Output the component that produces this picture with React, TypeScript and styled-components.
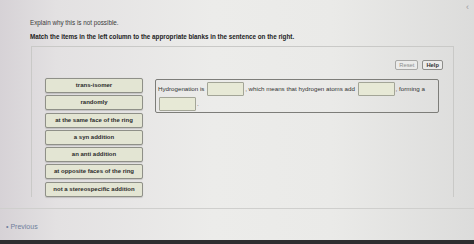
import React from "react";
import styled, { createGlobalStyle } from "styled-components";

const Global = createGlobalStyle`
  html, body { margin: 0; padding: 0; }
  body { font-family: "Liberation Sans", Arial, sans-serif; }
`;

const Page = styled.div`
  position: relative;
  width: 474px;
  height: 244px;
  overflow: hidden;
  display: flex;
  flex-direction: column;
  background: linear-gradient(90deg, #d6d2d6 0%, #e3e1e2 12%, #ececea 45%, #eaeae8 70%, #dcdcdb 100%);
  color: #2a2a2a;
`;

const Back = styled.div`
  position: absolute;
  right: 5px;
  top: 2px;
  font-size: 9px;
  color: #9a9a9e;
`;

const Intro = styled.div`
  margin: 19px 0 0 30px;
  font-size: 6.3px;
  line-height: 8px;
  color: #3a3a3a;
`;

const Prompt = styled.div`
  margin: 6px 0 0 30px;
  font-size: 6.3px;
  line-height: 8px;
  font-weight: bold;
  color: #222;
`;

const Panel = styled.div`
  margin: 5px 0 0 31px;
  width: 423px;
  height: 151px;
  border: 1px solid #c9c9c7;
  border-bottom: none;
  box-sizing: border-box;
  display: flex;
  flex-direction: column;
`;

const Toolbar = styled.div`
  display: flex;
  justify-content: flex-end;
  gap: 4px;
  padding: 13px 10px 0 0;
`;

const ToolButton = styled.div<{ $strong?: boolean }>`
  height: 10px;
  padding: 0 3px;
  border: 1px solid ${(p) => (p.$strong ? "#8d8d8a" : "#a8a8a6")};
  border-radius: 2px;
  box-sizing: border-box;
  font-size: 5.8px;
  line-height: 8px;
  font-weight: ${(p) => (p.$strong ? "bold" : "normal")};
  color: ${(p) => (p.$strong ? "#333" : "#8e8e8e")};
  background: #ebebea;
`;

const Work = styled.div`
  display: flex;
  gap: 12px;
  padding: 8px 0 0 13px;
`;

const Items = styled.div`
  display: flex;
  flex-direction: column;
  gap: 2.3px;
`;

const Item = styled.div`
  width: 98px;
  height: 15px;
  box-sizing: border-box;
  border: 1px solid #8f9088;
  border-radius: 2px;
  background: #e3e5d3;
  box-shadow: 0 0.5px 1px rgba(0, 0, 0, 0.15);
  font-size: 6px;
  font-weight: bold;
  line-height: 13px;
  text-align: center;
  color: #2c2c2c;
  white-space: nowrap;
`;

const Sentence = styled.div`
  margin-top: 1px;
  width: 284px;
  height: 34px;
  box-sizing: border-box;
  border: 1.5px solid #7d7d79;
  border-radius: 2px;
  padding: 2px 2px 0 2px;
  display: flex;
  flex-wrap: wrap;
  align-content: flex-start;
  align-items: center;
  row-gap: 1px;
  font-size: 6.2px;
  color: #333;
`;

const Words = styled.span`
  white-space: pre;
  line-height: 14px;
`;

const Blank = styled.span`
  display: inline-block;
  width: 37px;
  height: 14px;
  box-sizing: border-box;
  border: 1px solid #a3a597;
  border-radius: 1px;
  background: #e7e9d6;
  margin: 0 1px;
`;

const Divider = styled.div`
  margin-top: 11px;
  height: 1px;
  background: #cfcfcd;
`;

const Footer = styled.div`
  padding: 13px 0 0 6px;
  font-size: 7px;
  line-height: 9px;
  color: #6f7f9c;
`;

const Band = styled.div`
  margin-top: auto;
  height: 4px;
  background: #2e2e30;
`;

const items = [
  "trans-isomer",
  "randomly",
  "at the same face of the ring",
  "a syn addition",
  "an anti addition",
  "at opposite faces of the ring",
  "not a stereospecific addition",
];

export default function App() {
  return (
    <>
      <Global />
      <Page>
        <Back>‹</Back>
        <Intro>Explain why this is not possible.</Intro>
        <Prompt>Match the items in the left column to the appropriate blanks in the sentence on the right.</Prompt>
        <Panel>
          <Toolbar>
            <ToolButton>Reset</ToolButton>
            <ToolButton $strong>Help</ToolButton>
          </Toolbar>
          <Work>
            <Items>
              {items.map((t) => (
                <Item key={t}>{t}</Item>
              ))}
            </Items>
            <Sentence>
              <Words>Hydrogenation is </Words>
              <Blank />
              <Words>, which means that hydrogen atoms add </Words>
              <Blank />
              <Words>, forming a</Words>
              <Blank />
              <Words>.</Words>
            </Sentence>
          </Work>
        </Panel>
        <Divider />
        <Footer>• Previous</Footer>
        <Band />
      </Page>
    </>
  );
}
